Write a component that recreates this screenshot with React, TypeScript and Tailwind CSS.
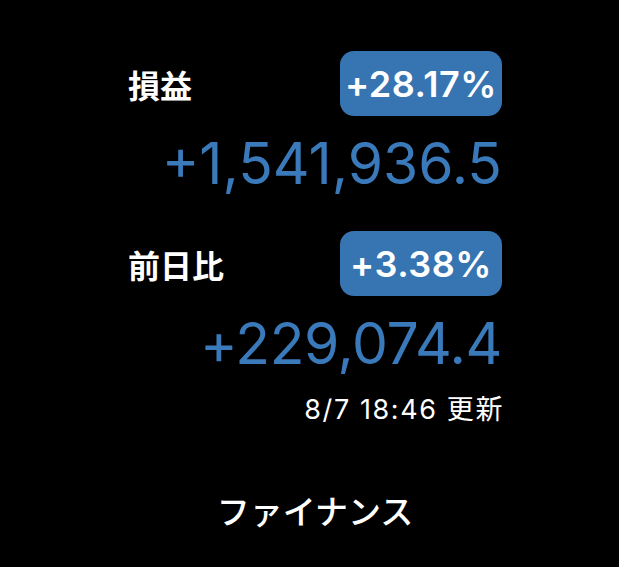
import React from "react";

const jp = "font-['Inter','Noto_Sans_CJK_JP',sans-serif]";

function Pill({ text }: { text: string }) {
  return (
    <div className="flex h-[65px] w-[162px] items-center justify-center rounded-[14px] bg-[#3774b2]">
      <span className={`${jp} text-[36px] font-semibold leading-none tracking-[0.5px] text-white`}>{text}</span>
    </div>
  );
}

export default function App() {
  return (
    <div className="h-[567px] w-[619px] overflow-hidden bg-black">
      <div className="ml-[128px] w-[374px] pt-[51px]">
        <div className="flex h-[65px] items-center justify-between">
          <span className="font-['Noto_Sans_CJK_JP',sans-serif] text-[32px] font-bold leading-none text-white">損益</span>
          <Pill text="+28.17%" />
        </div>
        <div className={`${jp} mt-[18px] text-right text-[57px] font-normal leading-[60px] text-[#3a7abb]`}>
          +1,541,936.5
        </div>
        <div className="mt-[37px] flex h-[65px] items-center justify-between">
          <span className="font-['Noto_Sans_CJK_JP',sans-serif] text-[32px] font-bold leading-none text-white">前日比</span>
          <Pill text="+3.38%" />
        </div>
        <div className={`${jp} mt-[18px] text-right text-[57px] font-normal leading-[60px] tracking-[-0.4px] text-[#3a7abb]`}>
          +229,074.4
        </div>
        <div className={`${jp} mt-[22px] -mr-[2px] text-right text-[27px] leading-[28px] tracking-[1.6px] text-white`}>
          8/7 18:46 更新
        </div>
        <div className="mt-[66px] text-center font-['Noto_Sans_CJK_JP',sans-serif] text-[33px] font-medium leading-[40px] text-white">
          ファイナンス
        </div>
      </div>
    </div>
  );
}
